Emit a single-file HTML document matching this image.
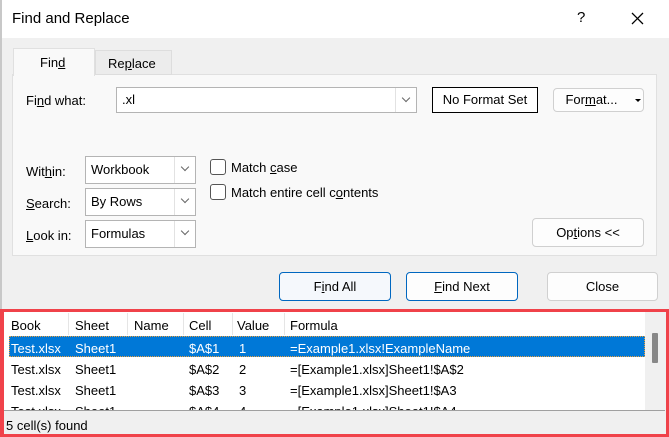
<!DOCTYPE html>
<html><head><style>
*{box-sizing:border-box;margin:0;padding:0}
body{width:669px;height:437px;background:#f0f0f0;font-family:"Liberation Sans",sans-serif;font-size:12.5px;color:#000;position:relative;overflow:hidden}
.a{position:absolute}
.t{position:absolute;white-space:nowrap}
.btn{position:absolute;border:1px solid #d0d0d0;border-radius:4px;background:#fdfdfd;text-align:center;font-size:13px}
.combo{position:absolute;background:#fff;border:1px solid #b4b4b4}
.combo span{position:absolute;left:5px;top:5px;font-size:13px}
.combo i{position:absolute;right:0;top:0;bottom:0;width:21px;border-left:1px solid #e2e2e2}
.combo i:after{content:"";position:absolute;left:7px;top:7px;width:5px;height:5px;border-right:1px solid #666;border-bottom:1px solid #666;transform:rotate(45deg)}
.cb{position:absolute;width:16px;height:16px;border:1px solid #555;border-radius:3px;background:#fff}
u{text-decoration:underline}
</style></head><body>
<div class="a" style="left:0;top:0;width:669px;height:38px;background:#fff"></div>
<div class="a" style="left:0;top:0;width:2px;height:437px;background:#c8c8c8"></div>
<div class="t" style="left:12px;top:10px;font-size:15px">Find and Replace</div>
<div class="t" style="left:577px;top:9px;font-size:15px">?</div>
<svg class="a" style="left:631px;top:12px" width="13" height="13"><path d="M1 1L12 12M12 1L1 12" stroke="#000" stroke-width="1.3"/></svg>

<div class="a" style="left:12px;top:74px;width:645px;height:182px;background:#f9f9f9;border:1px solid #e0e0e0"></div>
<div class="a" style="left:95px;top:50px;width:77px;height:25px;background:#ececec;border:1px solid #ddd"></div>
<div class="t" style="left:108px;top:56px;font-size:13px">Re<u>p</u>lace</div>
<div class="a" style="left:13px;top:48px;width:82px;height:28px;background:#f9f9f9;border:1px solid #e0e0e0;border-bottom:none"></div>
<div class="t" style="left:40px;top:55px;font-size:13px">Fin<u>d</u></div>

<div class="t" style="left:26px;top:93px;font-size:13px">Fi<u>n</u>d what:</div>
<div class="combo" style="left:116px;top:87px;width:301px;height:26px"><span style="top:4px">.xl</span><i></i></div>
<div class="a" style="left:432px;top:87px;width:106px;height:26px;border:1px solid #000;background:#fff;font-size:13px;text-align:center;line-height:24px">No Format Set</div>
<div class="btn" style="left:553px;top:88px;width:91px;height:24px;line-height:22px;padding-right:14px">For<u>m</u>at...</div>
<div class="a" style="left:635px;top:99px;border:3px solid transparent;border-top:3px solid #000"></div>

<div class="t" style="left:26px;top:164px;font-size:13px">Wit<u>h</u>in:</div>
<div class="t" style="left:26px;top:196px;font-size:13px"><u>S</u>earch:</div>
<div class="t" style="left:26px;top:228px;font-size:13px"><u>L</u>ook in:</div>
<div class="combo" style="left:85px;top:156px;width:111px;height:28px"><span>Workbook</span><i></i></div>
<div class="combo" style="left:85px;top:188px;width:111px;height:28px"><span>By Rows</span><i></i></div>
<div class="combo" style="left:85px;top:220px;width:111px;height:28px"><span>Formulas</span><i></i></div>
<div class="cb" style="left:210px;top:159px"></div>
<div class="t" style="left:231px;top:160px;font-size:13px">Match <u>c</u>ase</div>
<div class="cb" style="left:210px;top:184px"></div>
<div class="t" style="left:231px;top:185px;font-size:13px">Match entire cell c<u>o</u>ntents</div>
<div class="btn" style="left:532px;top:218px;width:112px;height:29px;line-height:27px">Op<u>t</u>ions &lt;&lt;</div>

<div class="btn" style="left:279px;top:272px;width:112px;height:29px;line-height:27px;border-color:#0067c0;background:#f5f8fc;border-width:1px">F<u>i</u>nd All</div>
<div class="btn" style="left:406px;top:272px;width:112px;height:29px;line-height:27px;border-color:#0067c0"><u>F</u>ind Next</div>
<div class="btn" style="left:547px;top:272px;width:111px;height:29px;line-height:27px">Close</div>

<div class="a" style="left:0;top:309px;width:669px;height:128px;border:3px solid #f0424a;border-left-width:4px"></div>
<div class="a" style="left:4px;top:312px;width:661px;height:99px;background:#fff;border-bottom:1px solid #a0a0a0"></div>
<div class="a" style="left:68px;top:313px;width:1px;height:22px;background:#e5e5e5"></div>
<div class="a" style="left:127px;top:313px;width:1px;height:22px;background:#e5e5e5"></div>
<div class="a" style="left:183px;top:313px;width:1px;height:22px;background:#e5e5e5"></div>
<div class="a" style="left:232px;top:313px;width:1px;height:22px;background:#e5e5e5"></div>
<div class="a" style="left:284px;top:313px;width:1px;height:22px;background:#e5e5e5"></div>
<div class="a" style="left:645px;top:312px;width:20px;height:98px;background:#f0f0f0"></div>
<div class="a" style="left:652px;top:333px;width:6px;height:30px;background:#888;border-radius:1px"></div>
<div class="a" style="left:9px;top:336px;width:636px;height:21px;background:#0078d7;border:1px dotted #e8a040"></div>
<div class="a" style="left:4px;top:313px;width:641px;height:97px;overflow:hidden;font-size:13px">
<div class="t" style="left:7px;top:5px">Book</div><div class="t" style="left:71px;top:5px">Sheet</div><div class="t" style="left:130px;top:5px">Name</div><div class="t" style="left:185px;top:5px">Cell</div><div class="t" style="left:233px;top:5px">Value</div><div class="t" style="left:286px;top:5px">Formula</div>
<div style="color:#fff"><div class="t" style="left:7px;top:28px">Test.xlsx</div><div class="t" style="left:71px;top:28px">Sheet1</div><div class="t" style="left:185px;top:28px">$A$1</div><div class="t" style="left:235px;top:28px">1</div><div class="t" style="left:286px;top:28px">=Example1.xlsx!ExampleName</div></div>
<div class="t" style="left:7px;top:49px">Test.xlsx</div><div class="t" style="left:71px;top:49px">Sheet1</div><div class="t" style="left:185px;top:49px">$A$2</div><div class="t" style="left:235px;top:49px">2</div><div class="t" style="left:286px;top:49px">=[Example1.xlsx]Sheet1!$A$2</div>
<div class="t" style="left:7px;top:70px">Test.xlsx</div><div class="t" style="left:71px;top:70px">Sheet1</div><div class="t" style="left:185px;top:70px">$A$3</div><div class="t" style="left:235px;top:70px">3</div><div class="t" style="left:286px;top:70px">=[Example1.xlsx]Sheet1!$A3</div>
<div class="t" style="left:7px;top:91px">Test.xlsx</div><div class="t" style="left:71px;top:91px">Sheet1</div><div class="t" style="left:185px;top:91px">$A$4</div><div class="t" style="left:235px;top:91px">4</div><div class="t" style="left:286px;top:91px">=[Example1.xlsx]Sheet1!$A4</div>
</div>
<div class="t" style="left:6px;top:418px;font-size:13px">5 cell(s) found</div>
</body></html>
